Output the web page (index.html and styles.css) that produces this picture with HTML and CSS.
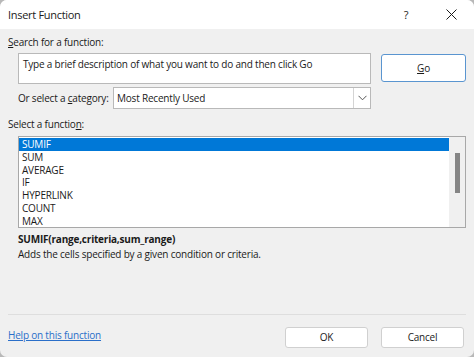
FILE: index.html
```html
<!DOCTYPE html>
<html>
<head>
<meta charset="utf-8">
<link rel="stylesheet" href="styles.css">
</head>
<body>
<div class="window">
  <div class="titlebar">
    <span class="title">Insert Function</span>
    <div class="controls">
      <span class="help">?</span>
      <span class="close"><svg width="11" height="11" viewBox="0 0 11 11"><path d="M0.5 0.5 L10.5 10.5 M10.5 0.5 L0.5 10.5" stroke="#1a1a1a" stroke-width="1" fill="none"/></svg></span>
    </div>
  </div>
  <div class="body">
    <div class="label top"><u>S</u>earch for a function:</div>
    <div class="search-row">
      <div class="search-box">Type a brief description of what you want to do and then click Go</div>
      <div class="btn go"><u>G</u>o</div>
    </div>
    <div class="cat-row">
      <span class="cat-label">Or select a <u>c</u>ategory:</span>
      <div class="select">
        <span class="select-text">Most Recently Used</span>
        <span class="arrow"><svg width="9" height="6" viewBox="0 0 9 6"><path d="M0.5 0.8 L4.5 4.8 L8.5 0.8" stroke="#555" stroke-width="1" fill="none"/></svg></span>
      </div>
    </div>
    <div class="label sel">Select a functio<u>n</u>:</div>
    <div class="list">
      <div class="items">
        <div class="item selected">SUMIF</div>
        <div class="item">SUM</div>
        <div class="item">AVERAGE</div>
        <div class="item">IF</div>
        <div class="item">HYPERLINK</div>
        <div class="item">COUNT</div>
        <div class="item">MAX</div>
      </div>
      <div class="scrollbar"><div class="thumb"></div></div>
    </div>
    <div class="sig">SUMIF(range,criteria,sum_range)</div>
    <div class="desc">Adds the cells specified by a given condition or criteria.</div>
    <div class="separator"></div>
    <div class="footer">
      <a class="link" href="#">Help on this function</a>
      <div class="buttons">
        <div class="btn ok">OK</div>
        <div class="btn cancel">Cancel</div>
      </div>
    </div>
  </div>
</div>
</body>
</html>
```
FILE: styles.css
```css
html, body {
  margin: 0;
  padding: 0;
  background: #b8b8b8;
}
body {
  width: 474px;
  height: 357px;
  overflow: hidden;
  font-family: "Open Sans", "Noto Sans", sans-serif;
  font-size: 10px;
  letter-spacing: -0.2px;
  color: #1a1a1a;
}
.window {
  width: 474px;
  height: 357px;
  border-radius: 7px;
  overflow: hidden;
  background: #f0f0f0;
  display: flex;
  flex-direction: column;
}
.titlebar {
  height: 29px;
  background: #ffffff;
  display: flex;
  align-items: center;
  justify-content: space-between;
  padding-left: 8px;
}
.title {
  font-size: 11px;
  letter-spacing: -0.3px;
  line-height: 14px;
  margin-top: 1px;
}
.controls {
  display: flex;
  align-items: center;
  height: 100%;
}
.help {
  font-size: 11px;
  width: 20px;
  text-align: center;
  margin-right: 25px;
}
.close {
  width: 20px;
  display: flex;
  justify-content: center;
  margin-right: 13px;
}
.body {
  flex: 1;
  padding: 0 8px;
  display: flex;
  flex-direction: column;
}
.label {
  line-height: 14px;
  white-space: nowrap;
}
.label.top {
  margin-top: 6px;
}
.search-row {
  display: flex;
  margin-top: 4px;
  padding-left: 10px;
}
.search-box {
  background: #fff;
  border: 1px solid #b9b9b9;
  padding: 3px 4px 1px;
  box-sizing: content-box;
  line-height: 14px;
  width: 343px;
  height: 25px;
}
.btn {
  background: #fff;
  border: 1px solid #d0d0d0;
  border-radius: 3px;
  display: flex;
  align-items: center;
  justify-content: center;
  box-sizing: border-box;
}
.go {
  width: 85px;
  height: 28px;
  margin-left: 10px;
  margin-top: 1px;
  border-color: #5a95d0;
}
.cat-row {
  display: flex;
  align-items: center;
  margin-top: 3px;
  padding-left: 10px;
}
.cat-label {
  width: 95px;
  white-space: nowrap;
}
.select {
  width: 258px;
  height: 22px;
  box-sizing: border-box;
  background: #fff;
  border: 1px solid #b9b9b9;
  display: flex;
  align-items: center;
  justify-content: space-between;
}
.select-text {
  padding-left: 3px;
}
.arrow {
  width: 17px;
  height: 100%;
  border-left: 1px solid #d4d4d4;
  display: flex;
  align-items: center;
  justify-content: center;
  box-sizing: border-box;
}
.label.sel {
  margin-top: 8px;
}
.list {
  margin-top: 5px;
  margin-left: 10px;
  width: 448px;
  height: 92px;
  box-sizing: border-box;
  border: 1px solid #a8a8a8;
  background: #fff;
  display: flex;
}
.items {
  flex: 1;
  padding-top: 1px;
  overflow: hidden;
}
.item {
  height: 12.8px;
  line-height: 12.8px;
  padding-left: 3px;
}
.item.selected {
  background: #0078d7;
  color: #fff;
}
.scrollbar {
  width: 16px;
  background: #f0f0f0;
  position: relative;
}
.thumb {
  position: absolute;
  left: 6px;
  top: 16px;
  width: 5px;
  height: 40px;
  background: #858585;
}
.sig {
  margin-top: 4px;
  padding-left: 10px;
  font-weight: bold;
  line-height: 14px;
}
.desc {
  margin-top: 1px;
  padding-left: 10px;
  line-height: 14px;
}
.separator {
  margin-top: auto;
  height: 1px;
  background: #dedede;
}
.footer {
  display: flex;
  align-items: center;
  justify-content: space-between;
  height: 42px;
}
.link {
  color: #2a6fc9;
  text-decoration: underline;
  margin-top: -2px;
}
.buttons {
  display: flex;
  gap: 13px;
  padding-right: 2px;
  margin-top: 2px;
}
.ok, .cancel {
  width: 83px;
  height: 21px;
}
```
